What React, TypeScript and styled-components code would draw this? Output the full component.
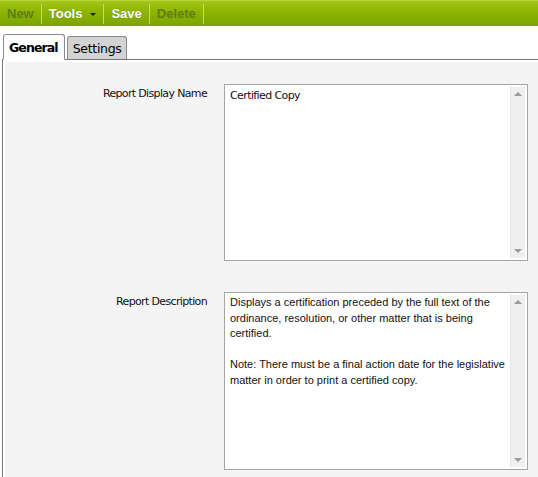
import styled, { createGlobalStyle } from "styled-components";

const GlobalStyle = createGlobalStyle`
  html, body { margin: 0; padding: 0; background: #ffffff; }
  body { font-family: Tahoma, "DejaVu Sans", "Liberation Sans", sans-serif; }
`;

const Page = styled.div`
  width: 538px;
  height: 477px;
  overflow: hidden;
  display: flex;
  flex-direction: column;
  background: #ffffff;
`;

const Toolbar = styled.div`
  height: 26px;
  display: flex;
  align-items: center;
  background: linear-gradient(to bottom, #a3c617 0%, #8cb400 45%, #7ba300 100%);
  border-top: 1px solid #b6d33a;
  box-sizing: border-box;
`;

const ToolButton = styled.div<{ $disabled?: boolean }>`
  display: flex;
  align-items: center;
  gap: 8px;
  padding: 0 7px;
  height: 20px;
  font-family: "Liberation Sans", Arial, sans-serif;
  font-weight: bold;
  font-size: 13px;
  color: ${(p) => (p.$disabled ? "#5f7d17" : "#ffffff")};
  text-shadow: ${(p) => (p.$disabled ? "none" : "0 0 1px rgba(40,60,0,0.35)")};
`;

const Separator = styled.div`
  width: 1px;
  height: 20px;
  background: #c4dc6c;
`;

const Caret = styled.span`
  width: 0;
  height: 0;
  border-left: 3px solid transparent;
  border-right: 3px solid transparent;
  border-top: 3px solid #1a2400;
  margin-top: 1px;
`;

const TabStrip = styled.div`
  display: flex;
  align-items: flex-end;
  gap: 2px;
  padding: 0 0 0 3px;
  height: 33px;
  box-sizing: border-box;
  position: relative;
  z-index: 1;
`;

const Tab = styled.div<{ $active?: boolean }>`
  height: ${(p) => (p.$active ? "26px" : "23px")};
  padding: 0 ${(p) => (p.$active ? "6px" : "4px")} 0 5px;
  display: flex;
  align-items: center;
  box-sizing: border-box;
  border: 1px solid #8a8a8a;
  border-bottom: ${(p) => (p.$active ? "1px solid #ffffff" : "none")};
  border-radius: 3px 3px 0 0;
  background: ${(p) => (p.$active ? "#ffffff" : "#d3d3d3")};
  font-family: "DejaVu Sans", Tahoma, sans-serif;
  font-size: 12.5px;
  font-weight: ${(p) => (p.$active ? "bold" : "normal")};
  letter-spacing: ${(p) => (p.$active ? "-0.9px" : "-0.3px")};
  color: #000000;
  margin-bottom: ${(p) => (p.$active ? "-1px" : "0")};
`;

const Panel = styled.div`
  flex: 1;
  margin-left: 2px;
  border-left: 1px solid #777777;
  border-top: 1px solid #777777;
  background: #ffffff;
  padding: 2px 0 0 2px;
  display: flex;
  flex-direction: column;
`;

const PanelBody = styled.div`
  flex: 1;
  background: #f4f4f4;
  padding-top: 22px;
  display: flex;
  flex-direction: column;
  gap: 31px;
`;

const FieldRow = styled.div`
  display: grid;
  grid-template-columns: 202px 304px;
  column-gap: 17px;
  align-items: start;
`;

const Label = styled.div`
  text-align: right;
  padding-top: 3px;
  font-family: "DejaVu Sans", Tahoma, sans-serif;
  font-size: 11px;
  letter-spacing: -0.65px;
  color: #111111;
`;

const TextBox = styled.div<{ $height: number }>`
  height: ${(p) => p.$height}px;
  box-sizing: border-box;
  border: 1px solid #a5a5a5;
  background: #ffffff;
  display: flex;
`;

const TextContent = styled.div<{ $sans?: boolean }>`
  flex: 1;
  padding: ${(p) => (p.$sans ? "2px 5px" : "3px 5px")};
  font-family: ${(p) =>
    p.$sans ? '"Liberation Sans", Arial, sans-serif' : '"DejaVu Sans", Tahoma, sans-serif'};
  font-size: 11px;
  letter-spacing: ${(p) => (p.$sans ? "0" : "-0.6px")};
  line-height: 15.5px;
  color: #111111;
  white-space: pre-wrap;
`;

const ScrollTrack = styled.div`
  width: 15px;
  margin: 2px 2px 2px 0;
  background: #efefef;
  border-left: 1px solid #e6e6e6;
  display: flex;
  flex-direction: column;
  justify-content: space-between;
  align-items: center;
  padding: 5px 0;
  box-sizing: border-box;
`;

const Arrow = styled.span<{ $down?: boolean }>`
  width: 0;
  height: 0;
  border-left: 4px solid transparent;
  border-right: 4px solid transparent;
  ${(p) =>
    p.$down
      ? "border-top: 4px solid #9a9a9a;"
      : "border-bottom: 4px solid #9a9a9a;"}
`;

function ScrollBar() {
  return (
    <ScrollTrack>
      <Arrow />
      <Arrow $down />
    </ScrollTrack>
  );
}

export default function App() {
  return (
    <>
      <GlobalStyle />
      <Page>
        <Toolbar>
          <ToolButton $disabled>New</ToolButton>
          <Separator />
          <ToolButton>
            Tools <Caret />
          </ToolButton>
          <Separator />
          <ToolButton>Save</ToolButton>
          <Separator />
          <ToolButton $disabled>Delete</ToolButton>
          <Separator />
        </Toolbar>

        <TabStrip>
          <Tab $active>General</Tab>
          <Tab>Settings</Tab>
        </TabStrip>

        <Panel>
          <PanelBody>
            <FieldRow>
              <Label>Report Display Name</Label>
              <TextBox $height={177}>
                <TextContent>Certified Copy</TextContent>
                <ScrollBar />
              </TextBox>
            </FieldRow>

            <FieldRow>
              <Label>Report Description</Label>
              <TextBox $height={178}>
                <TextContent $sans>
                  {"Displays a certification preceded by the full text of the ordinance, resolution, or other matter that is being certified.\n\nNote: There must be a final action date for the legislative matter in order to print a certified copy."}
                </TextContent>
                <ScrollBar />
              </TextBox>
            </FieldRow>
          </PanelBody>
        </Panel>
      </Page>
    </>
  );
}
